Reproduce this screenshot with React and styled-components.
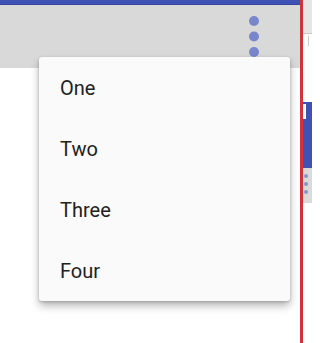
import React from "react";
import styled, { createGlobalStyle } from "styled-components";

const GlobalStyle = createGlobalStyle`
  html, body {
    margin: 0;
    padding: 0;
    background: #ffffff;
  }
  body {
    font-family: Roboto, "Noto Sans", sans-serif;
  }
`;

const items = ["One", "Two", "Three", "Four"];

function App() {
  return (
    <>
      <GlobalStyle />
      <Screen>
        <MainPanel>
          <StatusBar />
          <Toolbar>
            <OverflowButton aria-label="More options">
              <svg width="12" height="44" viewBox="0 0 12 44">
                <circle cx="6" cy="6" r="5" fill="#7986cb" />
                <circle cx="6" cy="21.5" r="5" fill="#7986cb" />
                <circle cx="6" cy="37" r="5" fill="#7986cb" />
              </svg>
            </OverflowButton>
          </Toolbar>
          <Content />
          <Menu>
            {items.map((label) => (
              <MenuItem key={label}>{label}</MenuItem>
            ))}
          </Menu>
        </MainPanel>
        <Divider />
        <SideStrip>
          <StripTop />
          <StripBody>
            <StripTick />
          </StripBody>
          <StripBar>
            <StripTab />
          </StripBar>
          <StripTools>
            <StripDot />
            <StripDot />
            <StripDot />
          </StripTools>
          <StripRest />
        </SideStrip>
      </Screen>
    </>
  );
}

export default App;

const Screen = styled.div`
  display: flex;
  width: 312px;
  height: 343px;
  overflow: hidden;
  background: #ffffff;
`;

const MainPanel = styled.div`
  position: relative;
  display: flex;
  flex-direction: column;
  width: 300px;
`;

const StatusBar = styled.div`
  height: 4px;
  background: #3f51b5;
  border-bottom: 1px solid #3646a0;
`;

const Toolbar = styled.div`
  display: flex;
  justify-content: flex-end;
  align-items: flex-start;
  height: 63px;
  padding-right: 40px;
  background: #d9d9d9;
`;

const OverflowButton = styled.div`
  display: flex;
  margin-top: 10px;
`;

const Content = styled.div`
  flex: 1;
  background: #ffffff;
`;

const Menu = styled.ul`
  position: absolute;
  top: 57px;
  left: 39px;
  width: 251px;
  margin: 0;
  padding: 0;
  list-style: none;
  background: #fafafa;
  border-radius: 3px;
  box-shadow: 0 5px 9px rgba(0, 0, 0, 0.28), 0 1px 3px rgba(0, 0, 0, 0.2);
`;

const MenuItem = styled.li`
  display: flex;
  align-items: center;
  height: 61px;
  padding-left: 21px;
  font-size: 20px;
  color: #212121;
`;

const Divider = styled.div`
  width: 3px;
  background: #d03436;
`;

const SideStrip = styled.div`
  display: flex;
  flex-direction: column;
  flex: 1;
  background: #ffffff;
`;

const StripTop = styled.div`
  height: 33px;
  background: #e6e6e6;
  border-bottom: 1px solid #c9c9c9;
`;

const StripBody = styled.div`
  height: 68px;
  padding-left: 5px;
  background: #fdfdfd;
`;

const StripTick = styled.div`
  width: 1px;
  height: 10px;
  margin-top: 2px;
  background: #cccccc;
`;

const StripBar = styled.div`
  height: 66px;
  background: #3f51b5;
`;

const StripTab = styled.div`
  width: 3px;
  height: 15px;
  margin-top: 2px;
  background: #ffffff;
`;

const StripTools = styled.div`
  display: flex;
  flex-direction: column;
  gap: 4px;
  height: 35px;
  padding: 6px 0 0 1px;
  box-sizing: border-box;
  background: #dadada;
`;

const StripDot = styled.div`
  width: 4px;
  height: 4px;
  border-radius: 50%;
  background: #8a94c8;
`;

const StripRest = styled.div`
  flex: 1;
  background: #ffffff;
`;
